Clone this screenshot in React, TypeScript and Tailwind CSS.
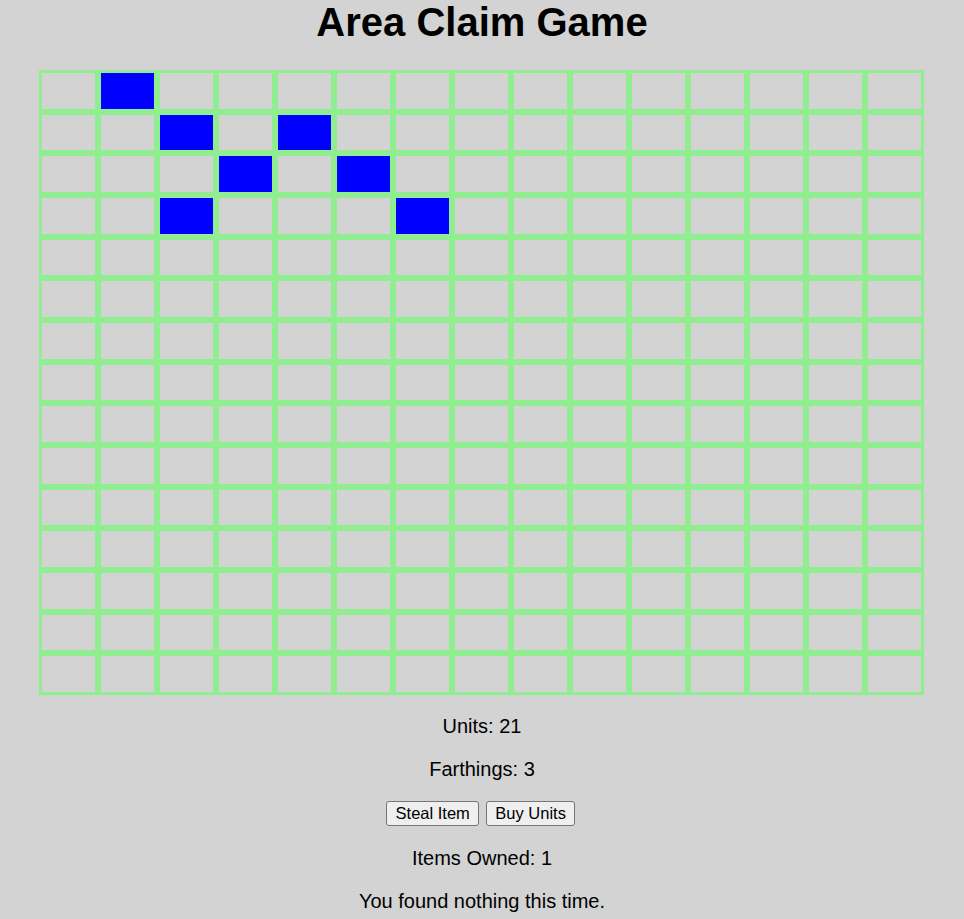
import React from "react";

const blue = new Set(["0-1", "1-2", "1-4", "2-3", "2-5", "3-2", "3-6"]);

export default function App() {
  const cells = [];
  for (let r = 0; r < 15; r++) {
    for (let c = 0; c < 15; c++) {
      const on = blue.has(`${r}-${c}`);
      cells.push(
        <div
          key={`${r}-${c}`}
          className={`border-[3px] border-[#90ee90] ${on ? "bg-[#0000ff]" : "bg-[#d3d3d3]"}`}
        />
      );
    }
  }
  return (
    <div
      className="min-h-[919px] w-full bg-[#d3d3d3] text-black overflow-hidden"
      style={{ fontFamily: '"Liberation Sans", Arial, sans-serif' }}
    >
      <h1 className="m-0 pt-0 text-center text-[40px] font-bold leading-[44px]">Area Claim Game</h1>
      <div className="ml-[39px] mt-[26px] grid h-[625px] w-[885px] grid-cols-15 grid-rows-15">
        {cells}
      </div>
      <p className="mt-[20px] text-center text-[20px] leading-[23px]">Units: 21</p>
      <p className="mt-[20px] text-center text-[20px] leading-[23px]">Farthings: 3</p>
      <div className="mt-[20px] flex justify-center gap-[7px] pr-[3px]">
        <button className="h-[25px] rounded-[3px] border border-[#767676] bg-[#efefef] px-[8.5px] text-[16.5px] leading-[19px]">
          Steal Item
        </button>
        <button className="h-[25px] rounded-[3px] border border-[#767676] bg-[#efefef] px-[8px] text-[16.5px] leading-[19px]">
          Buy Units
        </button>
      </div>
      <p className="mt-[21px] text-center text-[20px] leading-[23px]">Items Owned: 1</p>
      <p className="mt-[20px] text-center text-[20px] leading-[23px]">You found nothing this time.</p>
    </div>
  );
}
